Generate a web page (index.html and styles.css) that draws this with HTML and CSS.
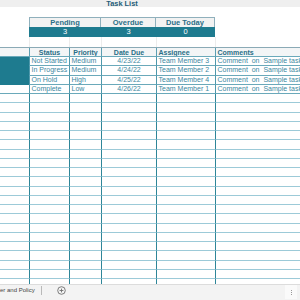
FILE: index.html
```html
<!DOCTYPE html>
<html>
<head>
<meta charset="utf-8">
<link rel="stylesheet" href="styles.css">
</head>
<body>
<div class="page">
  <div class="sheet">
    <div class="grid title-row"><div class="title">Task List</div></div>
    <div class="gap-row"></div>
    <div class="grid summary">
      <div class="sum-h c-pend">Pending</div>
      <div class="sum-h">Overdue</div>
      <div class="sum-h">Due Today</div>
      <div class="sum-v c-pend">3</div>
      <div class="sum-v">3</div>
      <div class="sum-v">0</div>
    </div>
    <div class="grid faint-row"><i></i><i></i><i></i><i></i><i></i><i></i></div>
    <div class="grid head-row">
      <div class="hc"></div>
      <div class="hc center">Status</div>
      <div class="hc center">Priority</div>
      <div class="hc center">Date Due</div>
      <div class="hc">Assignee</div>
      <div class="hc">Comments</div>
    </div>
    <div class="grid data-row">
      <div class="dc mark"></div><div class="dc">Not Started</div><div class="dc">Medium</div><div class="dc center">4/23/22</div><div class="dc">Team Member 3</div><div class="dc">Comment  on  Sample task</div>
    </div>
    <div class="grid data-row">
      <div class="dc mark"></div><div class="dc">In Progress</div><div class="dc">Medium</div><div class="dc center">4/24/22</div><div class="dc">Team Member 2</div><div class="dc">Comment  on  Sample task</div>
    </div>
    <div class="grid data-row">
      <div class="dc mark"></div><div class="dc">On Hold</div><div class="dc">High</div><div class="dc center">4/25/22</div><div class="dc">Team Member 4</div><div class="dc">Comment  on  Sample task</div>
    </div>
    <div class="grid data-row">
      <div class="dc"></div><div class="dc">Complete</div><div class="dc">Low</div><div class="dc center">4/26/22</div><div class="dc">Team Member 1</div><div class="dc">Comment  on  Sample task</div>
    </div>
    <div class="grid empty-row"><i></i><i></i><i></i><i></i><i></i><i></i></div>
    <div class="grid empty-row"><i></i><i></i><i></i><i></i><i></i><i></i></div>
    <div class="grid empty-row"><i></i><i></i><i></i><i></i><i></i><i></i></div>
    <div class="grid empty-row"><i></i><i></i><i></i><i></i><i></i><i></i></div>
    <div class="grid empty-row"><i></i><i></i><i></i><i></i><i></i><i></i></div>
    <div class="grid empty-row"><i></i><i></i><i></i><i></i><i></i><i></i></div>
    <div class="grid empty-row"><i></i><i></i><i></i><i></i><i></i><i></i></div>
    <div class="grid empty-row"><i></i><i></i><i></i><i></i><i></i><i></i></div>
    <div class="grid empty-row"><i></i><i></i><i></i><i></i><i></i><i></i></div>
    <div class="grid empty-row"><i></i><i></i><i></i><i></i><i></i><i></i></div>
    <div class="grid empty-row"><i></i><i></i><i></i><i></i><i></i><i></i></div>
    <div class="grid empty-row"><i></i><i></i><i></i><i></i><i></i><i></i></div>
    <div class="grid empty-row"><i></i><i></i><i></i><i></i><i></i><i></i></div>
    <div class="grid empty-row"><i></i><i></i><i></i><i></i><i></i><i></i></div>
    <div class="grid empty-row"><i></i><i></i><i></i><i></i><i></i><i></i></div>
    <div class="grid empty-row"><i></i><i></i><i></i><i></i><i></i><i></i></div>
    <div class="grid empty-row"><i></i><i></i><i></i><i></i><i></i><i></i></div>
    <div class="grid empty-row"><i></i><i></i><i></i><i></i><i></i><i></i></div>
    <div class="grid empty-row"><i></i><i></i><i></i><i></i><i></i><i></i></div>
    <div class="grid empty-row"><i></i><i></i><i></i><i></i><i></i><i></i></div>
    <div class="grid empty-row"><i></i><i></i><i></i><i></i><i></i><i></i></div>
    <div class="grid empty-row"><i></i><i></i><i></i><i></i><i></i><i></i></div>
  </div>
  <div class="tabs">
    <div class="tab-name">er and Policy</div>
    <div class="tab-sep"></div>
    <div class="tab-add">
      <svg width="9" height="9" viewBox="0 0 9 9"><circle cx="4.5" cy="4.5" r="3.8" fill="none" stroke="#6f6f6f" stroke-width="0.9"/><path d="M4.5 2.6v3.8M2.6 4.5h3.8" stroke="#6f6f6f" stroke-width="0.9"/></svg>
    </div>
    <div class="tab-fill"></div>
    <div class="tab-menu"><span></span><span></span><span></span></div>
  </div>
</div>
</body>
</html>
```
FILE: styles.css
```css
* { box-sizing: border-box; }
body {
  margin: 0;
  font-family: "Liberation Sans", Arial, sans-serif;
  background: #fff;
}
.page {
  width: 300px;
  height: 300px;
  display: flex;
  flex-direction: column;
  overflow: hidden;
}
.sheet {
  height: 284px;
  flex: none;
  overflow: hidden;
}
.grid {
  display: grid;
  grid-template-columns: 29px 40px 32px 55px 59px 85px;
}
.title-row {
  height: 7px;
  background: #efefef;
}
.title {
  grid-column: 2 / 6;
  text-align: center;
  font-weight: bold;
  font-size: 7.4px;
  line-height: 7px;
  color: #1f5d78;
  white-space: nowrap;
}
.gap-row { height: 10px; }
.summary {
  grid-template-rows: 10px 10px;
}
.sum-h {
  background: #f2f2f2;
  border-top: 1px solid #8fb0bc;
  border-right: 1px solid #8fb0bc;
  color: #2b6f87;
  font-weight: bold;
  font-size: 7.5px;
  line-height: 9px;
  text-align: center;
  white-space: nowrap;
}
.sum-h.c-pend { border-left: 1px solid #8fb0bc; }
.c-pend { grid-column: 2 / 4; }
.sum-v {
  background: #1e7b8f;
  color: #fff;
  font-size: 7.5px;
  line-height: 10px;
  text-align: center;
}
.faint-row { height: 10px; }
.faint-row i { border-left: 1px solid #ececec; }
.faint-row i:first-child { border-left-color: transparent; }
.head-row {
  height: 10px;
  border-top: 1px solid #8aaab6;
  background: #f3f5f6;
}
.hc {
  color: #2a6f87;
  font-weight: bold;
  font-size: 7px;
  line-height: 9px;
  padding: 0 1.5px;
  border-left: 1px solid #5c9fb2;
  border-bottom: 1px solid #6aa9ba;
  white-space: nowrap;
  overflow: hidden;
}
.hc:first-child { border-left: none; }
.center { text-align: center; }
.data-row { height: 9.25px; }
.dc {
  color: #3d88a1;
  font-size: 7px;
  line-height: 8.25px;
  padding: 0 1.5px;
  border-left: 1px solid #4f98ab;
  border-bottom: 1px solid #6aa9ba;
  white-space: pre;
  overflow: hidden;
}
.dc:first-child { border-left: none; }
.dc.mark {
  background: #1e7b8f;
  border-bottom-color: #1e7b8f;
}
.empty-row { height: 9.25px; }
.empty-row i {
  border-left: 1px solid #2e8699;
  border-bottom: 1px solid #9ccad8;
}
.empty-row i:first-child { border-left: none; }
.tabs {
  flex: 1;
  background: #f3f3f3;
  border-top: 1px solid #dcdcdc;
  display: flex;
  align-items: flex-start;
  font-size: 6px;
  color: #444;
}
.tab-name {
  line-height: 9px;
  padding-top: 1px;
  white-space: nowrap;
  width: 41px;
}
.tab-sep {
  width: 1px;
  height: 9px;
  margin-top: 1px;
  background: #b9b9b9;
}
.tab-add {
  margin-left: 15px;
  margin-top: 1px;
  height: 9px;
  display: flex;
}
.tab-fill { flex: 1; }
.tab-menu {
  width: 12px;
  height: 14px;
  margin-right: 3px;
  background: #fafafa;
  display: flex;
  flex-direction: column;
  align-items: center;
  justify-content: center;
  gap: 1px;
}
.tab-menu span {
  width: 1px;
  height: 1px;
  background: #9a9a9a;
}
```
